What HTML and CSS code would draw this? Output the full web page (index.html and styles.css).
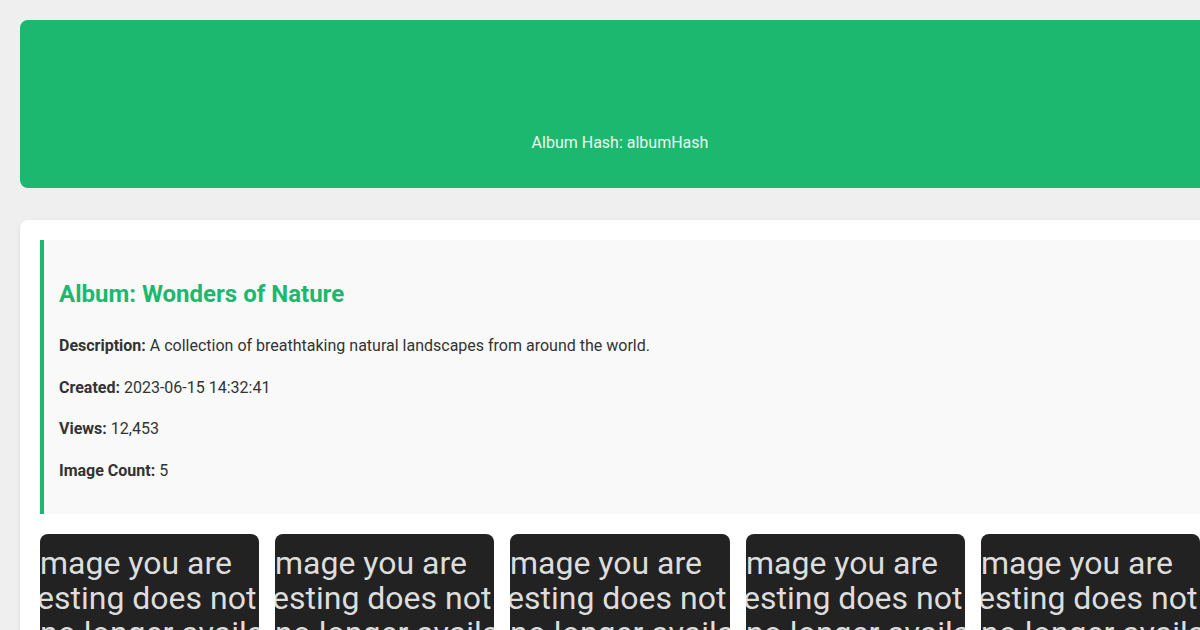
FILE: index.html
```html
<!DOCTYPE html>
<html lang="en">
<head>
<meta charset="utf-8">
<meta name="viewport" content="width=device-width, initial-scale=1">
<title>Album: Wonders of Nature</title>
<link rel="stylesheet" href="styles.css">
</head>
<body>
<div class="container">
  <header class="header">
    <p>Album Hash: albumHash</p>
  </header>
  <main class="card">
    <section class="album-info">
      <h2>Album: Wonders of Nature</h2>
      <p><strong>Description:</strong> A collection of breathtaking natural landscapes from around the world.</p>
      <p><strong>Created:</strong> 2023-06-15 14:32:41</p>
      <p><strong>Views:</strong> 12,453</p>
      <p><strong>Image Count:</strong> 5</p>
    </section>
    <section class="gallery">
      <svg class="photo"><text x="0" y="40">mage you are</text><text x="-3" y="75">esting does not</text><text x="0" y="110">no longer available</text></svg>
      <svg class="photo"><text x="0" y="40">mage you are</text><text x="-3" y="75">esting does not</text><text x="0" y="110">no longer available</text></svg>
      <svg class="photo"><text x="0" y="40">mage you are</text><text x="-3" y="75">esting does not</text><text x="0" y="110">no longer available</text></svg>
      <svg class="photo"><text x="0" y="40">mage you are</text><text x="-3" y="75">esting does not</text><text x="0" y="110">no longer available</text></svg>
      <svg class="photo"><text x="0" y="40">mage you are</text><text x="-3" y="75">esting does not</text><text x="0" y="110">no longer available</text></svg>
    </section>
  </main>
</div>
</body>
</html>
```

FILE: styles.css
```css
body {
  margin: 0;
  overflow: hidden;
  background: #efefef;
  color: #333;
  font-family: Roboto, sans-serif;
  font-size: 16px;
  line-height: 1.6;
}

/* Padding is added outside the full width, so the right edge runs past the window. */
.container {
  width: 100%;
  padding: 20px;
}

.header {
  margin-bottom: 32px;
  padding: 110px 16px 16px;
  border-radius: 8px;
  background: #1db870;
  color: #fff;
  text-align: center;
}

.header p {
  margin: 0 0 16px;
  opacity: 0.9;
}

.card {
  padding: 20px;
  border-radius: 8px;
  background: #fff;
  box-shadow: 0 2px 4px rgba(0, 0, 0, 0.1);
}

.album-info {
  margin-bottom: 20px;
  padding: 20px 15px 15px;
  border-left: 4px solid #1db870;
  background: #f9f9f9;
}

.album-info h2 {
  margin: 15px 0 20px;
  color: #1db870;
  font-size: 24px;
}

.album-info p {
  margin: 16px 0;
}

.gallery {
  display: grid;
  grid-template-columns: repeat(5, 1fr);
  gap: 16px;
}

.photo {
  display: block;
  width: 100%;
  height: 200px;
  overflow: hidden;
  border-radius: 8px;
  background: #222;
  fill: #ddd;
  font-size: 32px;
}
```
